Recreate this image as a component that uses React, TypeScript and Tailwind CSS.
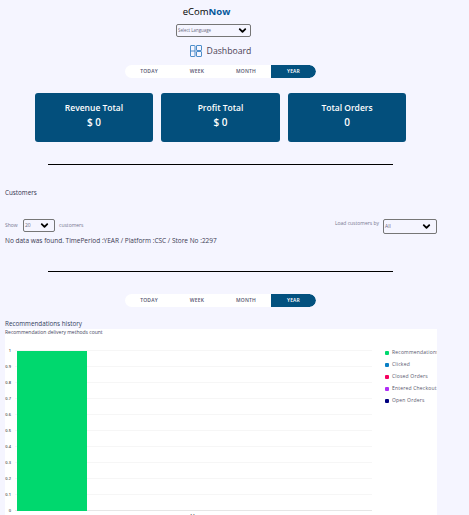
import React from 'react';
import { ChevronDown } from 'lucide-react';

const Tabs: React.FC = () => (
  <div className="flex w-[191px] h-[13px] mx-auto translate-x-[-14px] bg-white rounded-full overflow-hidden text-[5px] font-semibold tracking-[0.2px] text-[#55556f]">
    <div className="w-[48px] flex items-center justify-center">TODAY</div>
    <div className="w-[48px] flex items-center justify-center">WEEK</div>
    <div className="w-[50px] flex items-center justify-center">MONTH</div>
    <div className="w-[45px] flex items-center justify-center bg-[#03517f] text-white rounded-r-full">YEAR</div>
  </div>
);

const FakeSelect: React.FC<{ label: string; className: string; iconClass: string }> = ({ label, className, iconClass }) => (
  <div className={`flex items-center justify-between border border-[#767676] rounded-[2px] bg-[#f5f5ff] text-[#6a6a80] ${className}`}>
    <span>{label}</span>
    <ChevronDown className={iconClass} strokeWidth={4} color="#000" />
  </div>
);

const StatCard: React.FC<{ title: string; value: string; width: string }> = ({ title, value, width }) => (
  <div className={`${width} h-[49px] rounded-[3px] bg-[#034f7c] text-white flex flex-col items-center pt-[6px] font-semibold`}>
    <div className="text-[8.5px] leading-[17px]">{title}</div>
    <div className="text-[10px] leading-[13px]">{value}</div>
  </div>
);

const legend = [
  { label: 'Recommendations', color: 'bg-[#00d86e]' },
  { label: 'Clicked', color: 'bg-[#0a7fc4]' },
  { label: 'Closed Orders', color: 'bg-[#f5005f]' },
  { label: 'Entered Checkout', color: 'bg-[#b02cf5]' },
  { label: 'Open Orders', color: 'bg-[#00007f]' },
];

const ticks = ['1', '0.9', '0.8', '0.7', '0.6', '0.5', '0.4', '0.3', '0.2', '0.1', '0'];

const Chart: React.FC = () => (
  <svg width="380" height="175" className="block shrink-0" style={{ fontFamily: '"Open Sans", sans-serif' }}>
    {ticks.map((t, i) => (
      <g key={t}>
        <line x1="10" x2="367" y1={5.5 + i * 16} y2={5.5 + i * 16} stroke={i === 10 ? '#e6e6e6' : '#f6f6f6'} strokeWidth="1" />
        <text x="6" y={7 + i * 16} fontSize="4" fontWeight="600" textAnchor="end" fill="#555">{t}</text>
      </g>
    ))}
    <rect x="12" y="6" width="70" height="160" fill="#00d86e" />
    <text x="189" y="173" fontSize="5" textAnchor="middle" fill="#555">Mo</text>
  </svg>
);

export default function App() {
  return (
    <div className="h-[515px] w-full overflow-hidden bg-[#f5f5ff] font-['Open_Sans',sans-serif] text-[#33334d]">
      <div className="flex justify-center pt-[5px] translate-x-[-28px] text-[9.5px] leading-[14px] font-medium text-black">
        <span>eCom</span><span className="font-bold text-[#04579b]">Now</span>
      </div>
      <div className="flex justify-center mt-[5px] translate-x-[-21px]">
        <FakeSelect label="Select Language" className="w-[75px] h-[13px] pl-[1px] pr-[2px] text-[4.4px]" iconClass="w-[11px] h-[11px]" />
      </div>
      <div className="flex justify-center items-center gap-[5px] mt-[7px] translate-x-[-14px] h-[14px]">
        <svg width="12" height="12" viewBox="0 0 12 12" fill="none" stroke="#3b82c4" strokeWidth="0.9">
          <rect x="0.5" y="0.5" width="4.5" height="11" rx="0.5" />
          <line x1="0.5" y1="6" x2="5" y2="6" />
          <rect x="6.5" y="0.5" width="5" height="5" rx="0.5" />
          <rect x="6.5" y="6.5" width="5" height="5" rx="0.5" />
        </svg>
        <span className="text-[8.7px] leading-[14px] text-[#4a3f55]">Dashboard</span>
      </div>
      <div className="mt-[7px]"><Tabs /></div>

      <div className="flex gap-[8px] pl-[35px] mt-[15px]">
        <StatCard title="Revenue Total" value="$ 0" width="w-[118px]" />
        <StatCard title="Profit Total" value="$ 0" width="w-[119px]" />
        <StatCard title="Total Orders" value="0" width="w-[118px]" />
      </div>

      <div className="h-px bg-black ml-[48px] w-[345px] mt-[22px]" />

      <div className="pl-[5px] mt-[24px] text-[6.3px] leading-[8px]">Customers</div>

      <div className="flex justify-between pl-[5px] pr-[32px] mt-[22px]">
        <div className="flex items-center h-[13px] text-[5px] text-[#77778f]">
          <span className="w-[18px]">Show</span>
          <FakeSelect label="20" className="w-[32px] h-[13px] pl-[1px] pr-[4px]" iconClass="w-[11px] h-[11px]" />
          <span className="ml-[4px]">customers</span>
        </div>
        <div className="flex gap-[4px] text-[5px] text-[#77778f]">
          <span className="mt-[1px]">Load customers by</span>
          <FakeSelect label="All" className="w-[54px] h-[15px] pl-[1px] pr-[4px]" iconClass="w-[11px] h-[11px]" />
        </div>
      </div>

      <div className="pl-[5px] mt-[2px] text-[6.5px] leading-[10px] font-medium text-[#3a3a52]">
        No data was found. TimePeriod :YEAR / Platform :CSC / Store No :2297
      </div>

      <div className="h-px bg-black ml-[48px] w-[345px] mt-[25px]" />

      <div className="mt-[22px]"><Tabs /></div>

      <div className="pl-[5px] mt-[11px] text-[6.3px] leading-[11px] font-medium text-[#33405c]">Recommendations history</div>

      <div className="ml-[5px] w-[432px] h-[190px] bg-white overflow-hidden">
        <div className="text-[5px] leading-[7px] text-[#44445c]">Recommendation delivery methods count</div>
        <div className="flex mt-[9px]">
          <Chart />
          <div className="flex flex-col gap-[6px] pt-[5px] min-w-0 overflow-hidden">
            {legend.map((l) => (
              <div key={l.label} className="flex items-center gap-[3px] h-[6px] text-[5px] tracking-[0.2px] whitespace-nowrap text-[#55556a]">
                <span className={`w-[4px] h-[4px] shrink-0 rounded-[1px] ${l.color}`} />
                {l.label}
              </div>
            ))}
          </div>
        </div>
      </div>
    </div>
  );
}
